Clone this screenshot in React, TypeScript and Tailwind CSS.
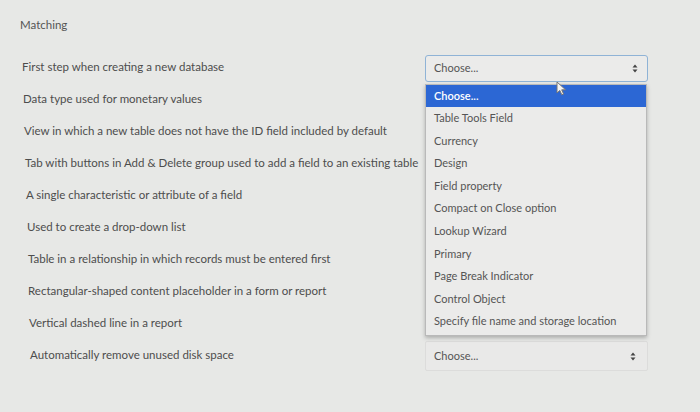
const prompts = [
  { text: 'First step when creating a new database', pad: 'pl-[22px]' },
  { text: 'Data type used for monetary values', pad: 'pl-[23px]' },
  { text: 'View in which a new table does not have the ID field included by default', pad: 'pl-[24px]' },
  { text: 'Tab with buttons in Add & Delete group used to add a field to an existing table', pad: 'pl-[25px]' },
  { text: 'A single characteristic or attribute of a field', pad: 'pl-[26px]' },
  { text: 'Used to create a drop-down list', pad: 'pl-[27px]' },
  { text: 'Table in a relationship in which records must be entered first', pad: 'pl-[28px]' },
  { text: 'Rectangular-shaped content placeholder in a form or report', pad: 'pl-[28px]' },
  { text: 'Vertical dashed line in a report', pad: 'pl-[29px]' },
  { text: 'Automatically remove unused disk space', pad: 'pl-[30px]' },
];

const options = [
  'Table Tools Field',
  'Currency',
  'Design',
  'Field property',
  'Compact on Close option',
  'Lookup Wizard',
  'Primary',
  'Page Break Indicator',
  'Control Object',
  'Specify file name and storage location',
];

function UpDown() {
  return (
    <svg width="6" height="9" viewBox="0 0 6 9" className="text-[#444]">
      <path d="M3 0.5 L5.5 3.5 H0.5 Z" fill="currentColor" />
      <path d="M3 8.5 L5.5 5.5 H0.5 Z" fill="currentColor" />
    </svg>
  );
}

function Cursor() {
  return (
    <svg width="11" height="15" viewBox="0 0 11 15">
      <path d="M1 1 L1 12 L3.8 9.4 L5.8 13.8 L7.6 13 L5.7 8.8 L9.6 8.8 Z" fill="#f4f4f4" stroke="#777" strokeWidth="1" strokeLinejoin="round" />
    </svg>
  );
}

export default function App() {
  return (
    <div
      className="relative w-[700px] h-[412px] overflow-hidden bg-[#e7e8e6] text-[#4a4a4a]"
      style={{ fontFamily: 'Lato, "Open Sans", sans-serif' }}
    >
      <div className="pl-[20px] pt-[18px] text-[11.5px] leading-[14px] text-[#555]">Matching</div>

      <div className="mt-[20px] flex flex-col">
        {prompts.map((p, i) => (
          <div key={i} className="flex h-[32px] items-center">
            <div className={`flex-1 ${p.pad} pb-[3px] text-[11.5px] text-[#4d4d4d]`}>{p.text}</div>
            <div className="w-[275px] pr-[52px]">
              {i === 0 && (
                <div className="flex h-[27px] items-center justify-between rounded-[3px] border border-[#8fb3d6] bg-[#ebebea] pl-[8px] pr-[9px] text-[11px] text-[#555]">
                  <span>Choose...</span>
                  <UpDown />
                </div>
              )}
              {i === 9 && (
                <div className="flex h-[30px] items-center justify-between rounded-[2px] border border-[#dcdcdb] bg-[#e9e9e8] pl-[8px] pr-[11px] text-[11px] text-[#555]">
                  <span>Choose...</span>
                  <UpDown />
                </div>
              )}
            </div>
          </div>
        ))}
      </div>

      {/* open dropdown list */}
      <div className="absolute left-[425px] top-[84px] w-[222px] border border-[#b9b9b9] bg-[#ebebea] pb-[2px] shadow-[0_2px_4px_rgba(0,0,0,0.25)]">
        <div className="flex h-[22px] items-center bg-[#2c67d4] pl-[8px] text-[11px] font-semibold text-white">
          Choose...
        </div>
        {options.map((o) => (
          <div key={o} className="flex h-[22.6px] items-center pl-[8px] text-[11px] text-[#555]">
            {o}
          </div>
        ))}
      </div>

      <div className="absolute left-[556px] top-[81px]">
        <Cursor />
      </div>
    </div>
  );
}
